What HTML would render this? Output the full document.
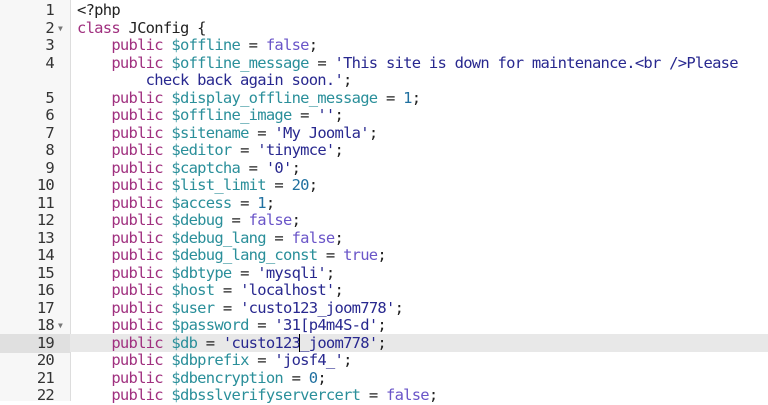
<!DOCTYPE html><html><head><style>
body{margin:0;width:768px;height:401px;overflow:hidden;background:#fff;font-family:"DejaVu Sans Mono",monospace;font-size:15.5px;letter-spacing:-0.75px;}
.g{position:absolute;left:0;top:0;width:70px;height:401px;background:#f7f7f7;border-right:1px solid #ddd;}
.row{position:absolute;left:0;width:768px;height:17.5px;line-height:17.5px;white-space:pre;color:#222;}
.n{position:absolute;left:0;width:54px;text-align:right;color:#333;}
.a{position:absolute;left:58px;font-size:8px;color:#777;}
.c{position:absolute;left:77px;}
.k{color:#a0307f}.v{color:#2a8f9a}.b{color:#6a55c8}.s{color:#28288f}.m{color:#2070a0}
.act{background:#e8e8e8}
</style></head><body>
<div class="g"></div>
<div class="row" style="top:2px"><span class="n">1</span><span class="c">&lt;?php</span></div>
<div class="row" style="top:19.5px"><span class="n">2</span><span class="a">▼</span><span class="c"><span class="k">class</span> JConfig {</span></div>
<div class="row" style="top:37px"><span class="n">3</span><span class="c">    <span class="k">public</span> <span class="v">$offline</span> = <span class="b">false</span>;</span></div>
<div class="row" style="top:54.5px"><span class="n">4</span><span class="c">    <span class="k">public</span> <span class="v">$offline_message</span> = <span class="s">'This site is down for maintenance.&lt;br /&gt;Please</span></span></div>
<div class="row" style="top:72px"><span class="c">        <span class="s">check back again soon.'</span>;</span></div>
<div class="row" style="top:89.5px"><span class="n">5</span><span class="c">    <span class="k">public</span> <span class="v">$display_offline_message</span> = <span class="m">1</span>;</span></div>
<div class="row" style="top:107px"><span class="n">6</span><span class="c">    <span class="k">public</span> <span class="v">$offline_image</span> = <span class="s">''</span>;</span></div>
<div class="row" style="top:124.5px"><span class="n">7</span><span class="c">    <span class="k">public</span> <span class="v">$sitename</span> = <span class="s">'My Joomla'</span>;</span></div>
<div class="row" style="top:142px"><span class="n">8</span><span class="c">    <span class="k">public</span> <span class="v">$editor</span> = <span class="s">'tinymce'</span>;</span></div>
<div class="row" style="top:159.5px"><span class="n">9</span><span class="c">    <span class="k">public</span> <span class="v">$captcha</span> = <span class="s">'0'</span>;</span></div>
<div class="row" style="top:177px"><span class="n">10</span><span class="c">    <span class="k">public</span> <span class="v">$list_limit</span> = <span class="m">20</span>;</span></div>
<div class="row" style="top:194.5px"><span class="n">11</span><span class="c">    <span class="k">public</span> <span class="v">$access</span> = <span class="m">1</span>;</span></div>
<div class="row" style="top:212px"><span class="n">12</span><span class="c">    <span class="k">public</span> <span class="v">$debug</span> = <span class="b">false</span>;</span></div>
<div class="row" style="top:229.5px"><span class="n">13</span><span class="c">    <span class="k">public</span> <span class="v">$debug_lang</span> = <span class="b">false</span>;</span></div>
<div class="row" style="top:247px"><span class="n">14</span><span class="c">    <span class="k">public</span> <span class="v">$debug_lang_const</span> = <span class="b">true</span>;</span></div>
<div class="row" style="top:264.5px"><span class="n">15</span><span class="c">    <span class="k">public</span> <span class="v">$dbtype</span> = <span class="s">'mysqli'</span>;</span></div>
<div class="row" style="top:282px"><span class="n">16</span><span class="c">    <span class="k">public</span> <span class="v">$host</span> = <span class="s">'localhost'</span>;</span></div>
<div class="row" style="top:299.5px"><span class="n">17</span><span class="c">    <span class="k">public</span> <span class="v">$user</span> = <span class="s">'custo123_joom778'</span>;</span></div>
<div class="row" style="top:317px"><span class="n">18</span><span class="a">▼</span><span class="c">    <span class="k">public</span> <span class="v">$password</span> = <span class="s">'31[p4m4S-d'</span>;</span></div>
<div class="row act" style="top:333.5px;height:18px;line-height:19px"><span class="n" style="background:#e0e0e0;width:70px;text-align:right"><span style="margin-right:16px">19</span></span><span class="c">    <span class="k">public</span> <span class="v">$db</span> = <span class="s">'custo123<span style="border-left:1.5px solid #000;margin-left:-1px"></span>_joom778'</span>;</span></div>
<div class="row" style="top:352px"><span class="n">20</span><span class="c">    <span class="k">public</span> <span class="v">$dbprefix</span> = <span class="s">'josf4_'</span>;</span></div>
<div class="row" style="top:369.5px"><span class="n">21</span><span class="c">    <span class="k">public</span> <span class="v">$dbencryption</span> = <span class="m">0</span>;</span></div>
<div class="row" style="top:387px"><span class="n">22</span><span class="c">    <span class="k">public</span> <span class="v">$dbsslverifyservercert</span> = <span class="b">false</span>;</span></div>
</body></html>
